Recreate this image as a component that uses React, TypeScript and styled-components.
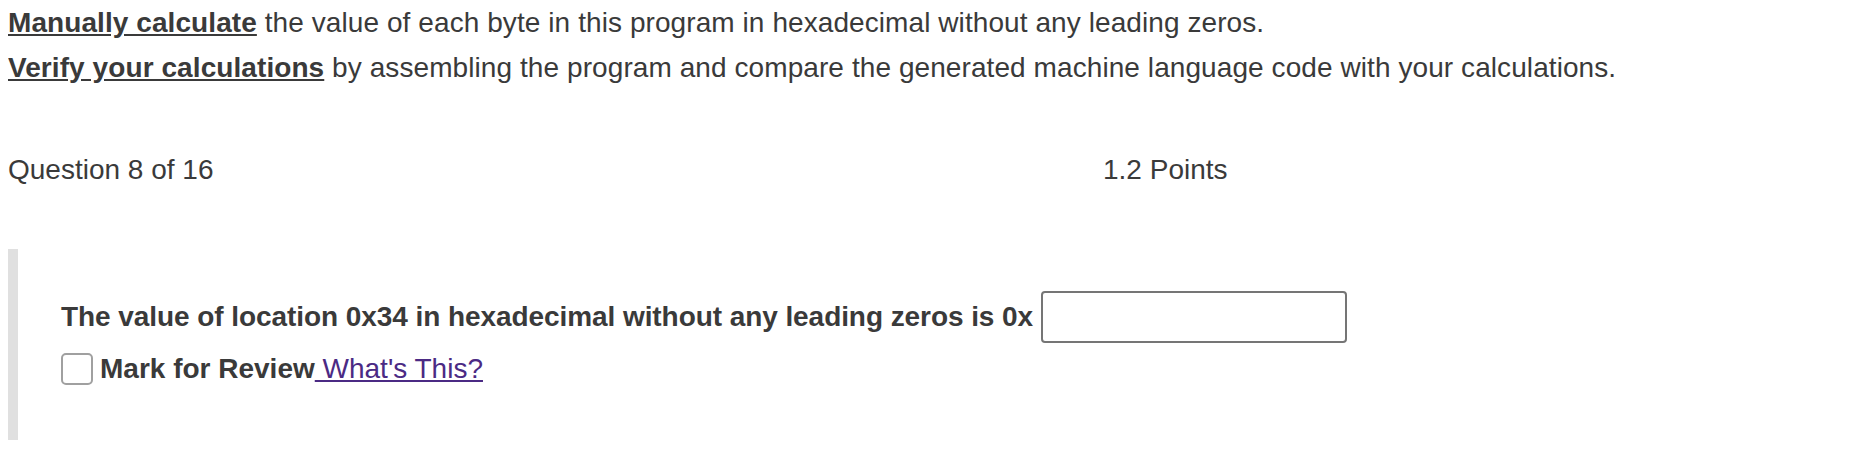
import React from "react";
import styled, {createGlobalStyle} from "styled-components";

const GlobalStyle = createGlobalStyle`
body {
    margin: 8px;
    background: #fff;
    color: #3a3a3a;
    font-family: "Liberation Sans", Arial, Helvetica, sans-serif;
    font-size: 28px;
}
`

const Instructions = styled.div`
    display: flex;
    flex-direction: column;
    gap: 15px;
    line-height: 30px;
    letter-spacing: 0.08px;
`

const Line = styled.p`
    margin: 0;
`

const Strong = styled.b`
    text-decoration: underline;
    text-underline-offset: 2px;
`

const QuestionHeader = styled.div`
    display: grid;
    grid-template-columns: 1095px auto;
    margin-top: 72px;
    line-height: 30px;
`

const QuestionBody = styled.div`
    margin-top: 64px;
    border-left: 10px solid #e0e0e0;
    padding: 42px 0 55px 43px;
    display: flex;
    flex-direction: column;
    gap: 10px;
`

const Prompt = styled.div`
    display: flex;
    align-items: center;
    gap: 8px;
    height: 52px;
    font-weight: bold;
    letter-spacing: -0.07px;
`

const AnswerInput = styled.input`
    width: 306px;
    height: 52px;
    box-sizing: border-box;
    border: 2px solid #757575;
    border-radius: 4px;
    font: inherit;
    font-weight: normal;
    padding: 0 8px;
`

const ReviewRow = styled.label`
    display: flex;
    align-items: center;
    gap: 7px;
    height: 32px;
    font-weight: bold;
`

const Check = styled.span`
    width: 28px;
    height: 28px;
    border: 2px solid #a0a0a0;
    border-radius: 5px;
    background: #fff;
`

const Link = styled.a`
    color: #4b2a84;
    font-weight: normal;
    text-decoration: underline;
    text-underline-offset: 2px;
`

export default function App() {
    return <>
        <GlobalStyle/>
        <Instructions>
            <Line><Strong>Manually calculate</Strong> the value of each byte in this program in hexadecimal without any leading zeros.</Line>
            <Line><Strong>Verify your calculations</Strong> by assembling the program and compare the generated machine language code with your calculations.</Line>
        </Instructions>
        <QuestionHeader>
            <span>Question 8 of 16</span>
            <span>1.2 Points</span>
        </QuestionHeader>
        <QuestionBody>
            <Prompt>
                <span>The value of location 0x34 in hexadecimal without any leading zeros is 0x</span>
                <AnswerInput type="text"/>
            </Prompt>
            <ReviewRow>
                <Check/>
                <span>Mark for Review<Link href="#">&nbsp;What's This?</Link></span>
            </ReviewRow>
        </QuestionBody>
    </>
}
